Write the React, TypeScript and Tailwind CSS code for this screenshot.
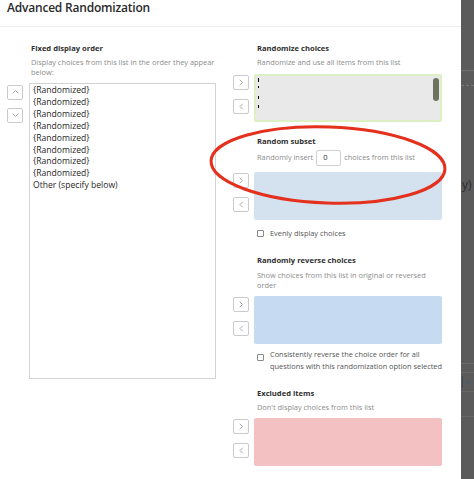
const btn =
  "flex h-[15px] w-[16px] items-center justify-center rounded-[2px] border border-[#cbcbcb] bg-white";

function Chevron({ dir }: { dir: "up" | "down" | "left" | "right" }) {
  const d = {
    up: "M1 4 L3.5 1.5 L6 4",
    down: "M1 2 L3.5 4.5 L6 2",
    right: "M2 1 L4.5 3.5 L2 6",
    left: "M4.5 1 L2 3.5 L4.5 6",
  }[dir];
  return (
    <svg width="7" height="7" viewBox="0 0 7 7" fill="none">
      <path d={d} stroke="#9b9b9b" strokeWidth="0.9" strokeLinecap="round" strokeLinejoin="round" />
    </svg>
  );
}

function MoveButtons() {
  return (
    <div className="flex flex-col gap-[9px] pt-[1px]">
      <div className={btn}>
        <Chevron dir="right" />
      </div>
      <div className={btn}>
        <Chevron dir="left" />
      </div>
    </div>
  );
}

function Heading({ children }: { children: React.ReactNode }) {
  return <div className="text-[7.6px] font-bold leading-[10px] text-[#2f2f2f]">{children}</div>;
}

function Desc({ children, className = "" }: { children: React.ReactNode; className?: string }) {
  return <div className={`text-[7.4px] leading-[10px] text-[#8c8c8c] ${className}`}>{children}</div>;
}

function Checkbox() {
  return <div className="h-[7px] w-[7px] shrink-0 rounded-[1px] border border-[#8a8a8a] bg-white" />;
}

export default function App() {
  const items = Array.from({ length: 8 }, () => "{Randomized}");

  return (
    <div className="relative flex h-[479px] w-[474px] overflow-hidden bg-white font-['Open_Sans',sans-serif]">
      <div className="flex w-[461px] flex-col bg-white">
        <div className="h-[27px] shrink-0 border-b border-[#ececec] px-[7px]">
          <div className="text-[12px] font-semibold leading-[15px] tracking-[-0.2px] text-[#2a2a2a]">
            Advanced Randomization
          </div>
        </div>

        <div className="flex pt-[16px]">
          {/* fixed order column */}
          <div className="w-[233px] shrink-0 pl-[7px]">
            <div className="ml-[24px] w-[188px]">
              <Heading>Fixed display order</Heading>
              <Desc className="mt-[4px] leading-[9px]">
                Display choices from this list in the order they appear below:
              </Desc>
            </div>
            <div className="mt-[6px] flex gap-[6px]">
              <div className="flex flex-col gap-[8px] pt-[2px]">
                <div className={btn}>
                  <Chevron dir="up" />
                </div>
                <div className={btn}>
                  <Chevron dir="down" />
                </div>
              </div>
              <div className="h-[296px] w-[187px] border border-[#d3d3d3] pl-[3px] pt-[1px] text-[8.6px] leading-[11.9px] text-[#1f1f1f]">
                {items.map((t, i) => (
                  <div key={i}>{t}</div>
                ))}
                <div>Other (specify below)</div>
              </div>
            </div>
          </div>

          {/* right column */}
          <div className="flex w-[228px] flex-col">
            <div className="ml-[24px]">
              <Heading>Randomize choices</Heading>
              <Desc className="mt-[4px]">Randomize and use all items from this list</Desc>
            </div>
            <div className="mt-[7px] flex gap-[5px]">
              <MoveButtons />
              <div className="flex h-[48px] w-[188px] justify-between rounded-[2px] border-[2px] border-[#ddefc3] bg-[#e9e9e9] py-[1px] pl-[2px] pr-[1px]">
                <div className="flex flex-col gap-[4px] pt-[1px]">
                  <div className="h-[4px] w-[1px] bg-black" />
                  <div className="h-[2px] w-[1px] bg-black" />
                  <div className="mt-[4px] h-[3px] w-[1px] bg-black" />
                  <div className="mt-[2px] h-[3px] w-[1px] bg-black" />
                </div>
                <div className="mt-[1px] h-[23px] w-[6px] rounded-[3px] bg-[#6d735f]" />
              </div>
            </div>

            <div className="ml-[24px] mt-[14px]">
              <Heading>Random subset</Heading>
              <div className="mt-[4px] flex items-center text-[7.4px] text-[#8c8c8c]">
                <span>Randomly insert</span>
                <div className="mx-[3px] flex h-[16px] w-[25px] items-center rounded-[2px] border border-[#cfcfcf] pl-[6px] text-[7.6px] text-[#333]">
                  0
                </div>
                <span>choices from this list</span>
              </div>
            </div>
            <div className="mt-[6px] flex gap-[5px]">
              <MoveButtons />
              <div className="h-[48px] w-[188px] rounded-[2px] bg-[#d4e1ee]" />
            </div>
            <div className="ml-[24px] mt-[8px] flex items-center gap-[6px] text-[7.4px] leading-[10px] text-[#555]">
              <Checkbox />
              <span>Evenly display choices</span>
            </div>

            <div className="ml-[24px] mt-[17px]">
              <Heading>Randomly reverse choices</Heading>
              <Desc className="mt-[5px]">
                <div>Show choices from this list in original or reversed</div>
                <div>order</div>
              </Desc>
            </div>
            <div className="mt-[6px] flex gap-[5px]">
              <MoveButtons />
              <div className="h-[48px] w-[188px] rounded-[2px] bg-[#c6daf1]" />
            </div>
            <div className="ml-[24px] mt-[4px] flex items-start gap-[6px] text-[7.4px] leading-[12px] text-[#555]">
              <div className="mt-[6px]">
                <Checkbox />
              </div>
              <div className="whitespace-nowrap">
                <div>Consistently reverse the choice order for all</div>
                <div>questions with this randomization option selected</div>
              </div>
            </div>

            <div className="ml-[24px] mt-[16px]">
              <Heading>Excluded items</Heading>
              <Desc className="mt-[4px]">Don't display choices from this list</Desc>
            </div>
            <div className="mt-[6px] flex gap-[5px]">
              <MoveButtons />
              <div className="h-[48px] w-[188px] rounded-[2px] bg-[#f3c1c1]" />
            </div>
          </div>
        </div>
      </div>

      {/* dimmed page behind the dialog */}
      <div className="flex flex-1 flex-col bg-[#5b5b5b]">
        <div className="h-[70px]" />
        <div className="h-[1px] bg-[#6e6e6e]" />
        <div className="mt-[14px] h-[1px] border-t border-dashed border-[#777]" />
        <div className="mt-[92px] pl-[1px] text-[12px] leading-[14px] text-[#2d2d2d]">y)</div>
        <div className="mt-[171px] h-[1px] bg-[#6a6a6a]" />
        <div className="mt-[8px] flex h-[20px] items-center gap-[3px] border-y border-[#666] pl-[1px]">
          <div className="h-[12px] w-[1px] bg-[#3d4a5e]" />
          <span className="text-[8px] text-[#3e5a80]">k</span>
        </div>
        <div className="mt-[24px] h-[1px] bg-[#666]" />
      </div>

      {/* red annotation */}
      <svg
        className="pointer-events-none absolute left-0 top-0"
        width="474"
        height="479"
        viewBox="0 0 474 479"
      >
        <ellipse
          cx="328"
          cy="165"
          rx="117"
          ry="38"
          transform="rotate(2 328 165)"
          fill="none"
          stroke="#e4301d"
          strokeWidth="3"
        />
      </svg>
    </div>
  );
}
